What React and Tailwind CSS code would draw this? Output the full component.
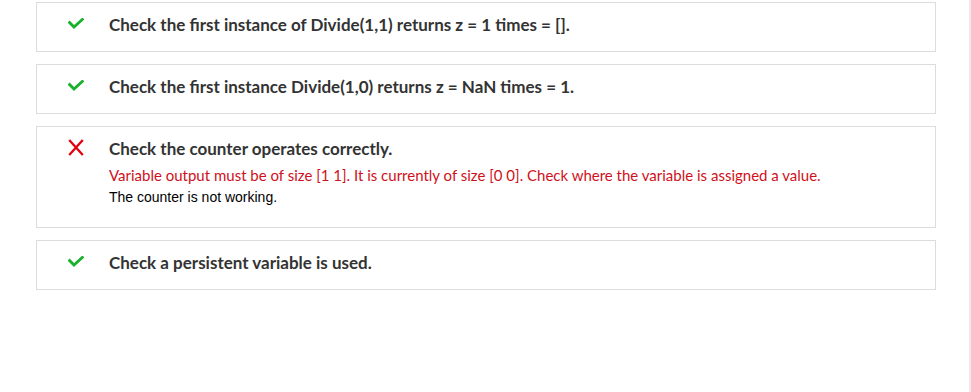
import React from "react";

const Check = () => (
  <svg width="16" height="11" viewBox="0 0 16 11" className="block">
    <path d="M1.6 4.6 L6 9 L14.4 1.4" fill="none" stroke="#17b12a" strokeWidth="2.8" strokeLinecap="square" />
  </svg>
);

const Cross = () => (
  <svg width="16" height="17" viewBox="0 0 16 17" className="block">
    <path d="M1.2 1 L14.8 16 M14.8 1 L1.2 16" fill="none" stroke="#e3000f" strokeWidth="2.3" />
  </svg>
);

const lato = { fontFamily: "Lato, 'Noto Sans', sans-serif" };

const Row = ({ title }) => (
  <div className="border border-[#dcdcdc] bg-white flex items-start h-[50px] pt-[10px]">
    <div className="w-[72px] pl-[31px] shrink-0 pt-[5px]">
      <Check />
    </div>
    <div className="text-[17px] font-bold text-[#333333] leading-[24px]" style={lato}>{title}</div>
  </div>
);

export default function App() {
  return (
    <div className="w-[971px] h-[392px] bg-white relative overflow-hidden">
      <div className="absolute right-0 top-0 bottom-0 w-[2px] bg-[#ebebeb]" />
      <div className="pl-[36px] pr-[35px] pt-[2px] flex flex-col gap-[12px]">
        <Row title="Check the first instance of Divide(1,1) returns z = 1 times = []." />
        <Row title="Check the first instance Divide(1,0) returns z = NaN times = 1." />
        <div className="border border-[#dcdcdc] bg-white flex items-start h-[102px] pt-[10px]">
          <div className="w-[72px] pl-[31px] shrink-0 pt-[2px]">
            <Cross />
          </div>
          <div className="flex flex-col">
            <div className="text-[17px] font-bold text-[#333333] leading-[24px]" style={lato}>
              Check the counter operates correctly.
            </div>
            <div className="text-[15px] text-[#d0101b] leading-[20px] mt-[4px]" style={lato}>
              Variable output must be of size [1 1]. It is currently of size [0 0]. Check where the variable is assigned a value.
            </div>
            <div className="text-[14px] text-black leading-[20px] mt-[2px]" style={{ fontFamily: "'Liberation Sans', Arial, sans-serif" }}>
              The counter is not working.
            </div>
          </div>
        </div>
        <Row title="Check a persistent variable is used." />
      </div>
    </div>
  );
}
